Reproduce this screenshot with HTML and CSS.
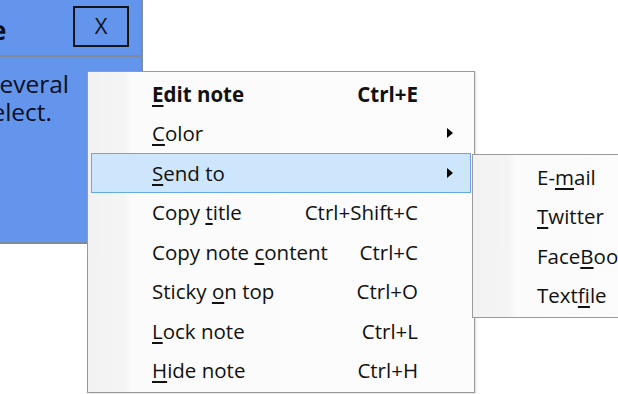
FILE: index.html
```html
<!DOCTYPE html>
<html>
<head>
<meta charset="utf-8">
<link rel="stylesheet" href="styles.css">
</head>
<body>
<div class="stage">
  <div class="note">
    <div class="note-title">
      <span class="title-text">Note</span>
      <span class="close-btn">X</span>
    </div>
    <div class="note-body">
      <div class="line l1">Select several</div>
      <div class="line l2">notes to select.</div>
    </div>
  </div>

  <div class="menu">
    <div class="item default"><span class="label"><u>E</u>dit note</span><span class="key">Ctrl+E</span><span class="arrow"></span></div>
    <div class="item"><span class="label"><u>C</u>olor</span><span class="key"></span><span class="arrow"><i class="tri"></i></span></div>
    <div class="item hot"><span class="label"><u>S</u>end to</span><span class="key"></span><span class="arrow"><i class="tri"></i></span></div>
    <div class="item"><span class="label">Copy <u>t</u>itle</span><span class="key">Ctrl+Shift+C</span><span class="arrow"></span></div>
    <div class="item"><span class="label">Copy note <u>c</u>ontent</span><span class="key">Ctrl+C</span><span class="arrow"></span></div>
    <div class="item"><span class="label">Sticky <u>o</u>n top</span><span class="key">Ctrl+O</span><span class="arrow"></span></div>
    <div class="item"><span class="label"><u>L</u>ock note</span><span class="key">Ctrl+L</span><span class="arrow"></span></div>
    <div class="item"><span class="label"><u>H</u>ide note</span><span class="key">Ctrl+H</span><span class="arrow"></span></div>
  </div>

  <div class="submenu">
    <div class="item"><span class="label">E-<u>m</u>ail</span></div>
    <div class="item"><span class="label"><u>T</u>witter</span></div>
    <div class="item"><span class="label">Face<u>B</u>ook</span></div>
    <div class="item"><span class="label">Text<u>f</u>ile</span></div>
  </div>
</div>
</body>
</html>
```

FILE: styles.css
```css
html, body {
  margin: 0;
  padding: 0;
  background: #ffffff;
  width: 618px;
  height: 394px;
  overflow: hidden;
}

.stage {
  position: relative;
  width: 618px;
  height: 394px;
  overflow: hidden;
  font-family: "Open Sans", "Noto Sans", sans-serif;
  color: #111;
}

/* Note window (partially off-screen to the left) */
.note {
  margin-left: -140px;
  width: 281px;
  height: 242px;
  background: #6495ed;
  border-right: 2px solid #7f8a9c;
  border-bottom: 2px solid #7f8a9c;
  display: flex;
  flex-direction: column;
}

.note-title {
  height: 55px;
  border-bottom: 2px solid #7f8a9c;
  display: flex;
  align-items: center;
  justify-content: space-between;
  padding: 0 12px 0 0;
}

.title-text {
  font-weight: bold;
  font-size: 27px;
  margin-left: 80px;
  padding-top: 4px;
  color: #0d1020;
}

.close-btn {
  width: 52px;
  height: 34px;
  border: 2px solid #101418;
  display: flex;
  align-items: center;
  justify-content: center;
  font-size: 22px;
  padding-bottom: 3px;
  margin-top: -2px;
  color: #101418;
}

.note-body {
  padding-top: 13px;
  font-size: 24.5px;
  line-height: 28px;
  color: #0d1020;
}

.line {
  text-align: right;
  white-space: nowrap;
}
.l1 { padding-right: 72px; }
.l2 { padding-right: 89px; }

/* Context menu */
.menu {
  position: absolute;
  left: 87px;
  top: 71px;
  width: 382px;
  padding: 2px 2px;
  background: linear-gradient(to right, #f2f2f2 0, #f4f4f4 36px, #fbfbfb 44px, #fcfcfc 100%);
  border: 1px solid #9a9a9a;
  box-shadow: 1px 1px 2px rgba(0,0,0,0.15);
}

.item {
  height: 37.5px;
  margin: 0 1px;
  border: 1px solid transparent;
  display: flex;
  align-items: center;
  font-size: 20.5px;
  padding-left: 60px;
  padding-right: 17px;
}

.item u {
  text-decoration: underline;
  text-underline-offset: 3px;
  text-decoration-thickness: 1.5px;
}

.item.default { font-weight: bold; }

.item.hot {
  background: #cde6fb;
  border-color: #62a8eb;
}

.label {
  flex: 1;
  white-space: nowrap;
}

.key {
  white-space: nowrap;
  text-align: right;
}

.arrow {
  width: 35px;
  display: flex;
  justify-content: flex-end;
  align-items: center;
}

.tri {
  display: block;
  width: 0;
  height: 0;
  border-left: 6px solid #000;
  border-top: 5px solid transparent;
  border-bottom: 5px solid transparent;
}

/* Submenu */
.submenu {
  position: absolute;
  left: 472px;
  top: 154px;
  width: 220px;
  padding: 2px 2px;
  background: linear-gradient(to right, #f2f2f2 0, #f4f4f4 36px, #fbfbfb 44px, #fcfcfc 100%);
  border: 1px solid #9a9a9a;
}

.submenu .item {
  padding-left: 60px;
}
```
